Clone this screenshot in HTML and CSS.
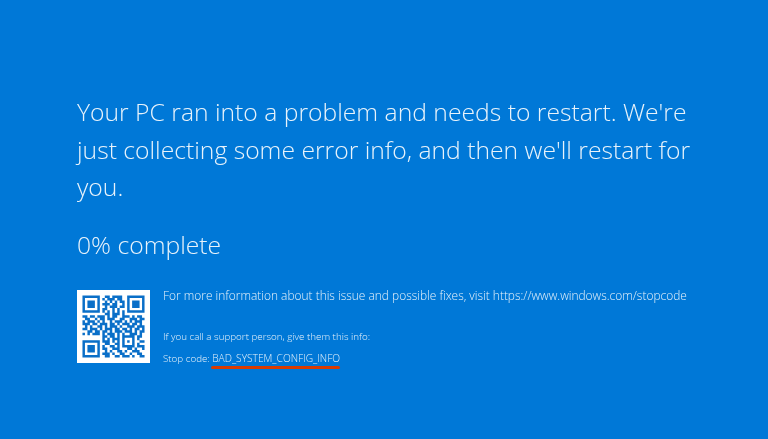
FILE: index.html
```html
<!DOCTYPE html>
<html lang="en">
<head>
<meta charset="utf-8">
<title>Stop code</title>
<link rel="stylesheet" href="styles.css">
</head>
<body>
<main class="screen">
  <h1 class="headline">Your PC ran into a problem and needs to restart. We're<br>just collecting some error info, and then we'll restart for<br>you.</h1>
  <p class="progress">0% complete</p>
  <section class="details">
    <svg class="qr" viewBox="-2.2 -2.2 29.4 29.4" width="73" height="73" role="img" aria-label="QR code">
      <rect class="qr-bg" x="-2.2" y="-2.2" width="29.4" height="29.4"/>
      <path class="qr-mods" d="M0 .5h7M9 .5h2M12 .5h3M15 .5h1M18 .5h7
M0 1.5h1M6 1.5h1M8 1.5h1M10 1.5h3M14 1.5h2M18 1.5h1M24 1.5h1
M0 2.5h1M2 2.5h3M6 2.5h1M9 2.5h1M11 2.5h1M13 2.5h1M15 2.5h2M18 2.5h1M20 2.5h3M24 2.5h1
M0 3.5h1M2 3.5h3M6 3.5h1M8 3.5h3M12 3.5h2M16 3.5h1M18 3.5h1M20 3.5h3M24 3.5h1
M0 4.5h1M2 4.5h3M6 4.5h1M9 4.5h1M11 4.5h3M15 4.5h2M18 4.5h1M20 4.5h3M24 4.5h1
M0 5.5h1M6 5.5h1M8 5.5h2M12 5.5h1M14 5.5h1M18 5.5h1M24 5.5h1
M0 6.5h7M8 6.5h1M10 6.5h1M12 6.5h1M14 6.5h1M16 6.5h1M18 6.5h7
M9 7.5h2M12 7.5h3M16 7.5h1
M0 8.5h2M3 8.5h2M6 8.5h3M10 8.5h1M12 8.5h2M16 8.5h3M20 8.5h1M22 8.5h2
M1 9.5h2M5 9.5h1M7 9.5h2M10 9.5h3M15 9.5h2M19 9.5h3M23 9.5h2
M0 10.5h1M2 10.5h3M6 10.5h1M8 10.5h1M11 10.5h1M13 10.5h3M17 10.5h1M19 10.5h1M21 10.5h3
M0 11.5h3M4 11.5h2M7 11.5h3M11 11.5h2M14 11.5h1M16 11.5h3M20 11.5h2M23 11.5h1
M1 12.5h1M3 12.5h1M6 12.5h2M9 12.5h1M11 12.5h3M15 12.5h1M18 12.5h3M22 12.5h3
M0 13.5h2M3 13.5h3M7 13.5h1M9 13.5h3M13 13.5h2M16 13.5h2M19 13.5h1M21 13.5h2M24 13.5h1
M2 14.5h2M5 14.5h2M8 14.5h2M11 14.5h1M13 14.5h3M17 14.5h3M21 14.5h1M23 14.5h2
M0 15.5h1M2 15.5h1M4 15.5h3M8 15.5h1M10 15.5h3M14 15.5h1M16 15.5h1M19 15.5h3M23 15.5h1
M8 16.5h2M11 16.5h2M14 16.5h1M16 16.5h5M22 16.5h2
M8 17.5h1M10 17.5h1M12 17.5h3M16 17.5h1M20 17.5h1M22 17.5h1
M0 18.5h7M8 18.5h3M12 18.5h1M14 18.5h1M16 18.5h1M18 18.5h1M20 18.5h1M23 18.5h2
M0 19.5h1M6 19.5h1M9 19.5h2M13 19.5h2M16 19.5h1M20 19.5h1M22 19.5h1
M0 20.5h1M2 20.5h3M6 20.5h1M8 20.5h1M11 20.5h2M14 20.5h1M16 20.5h5M22 20.5h3
M0 21.5h1M2 21.5h3M6 21.5h1M8 21.5h2M12 21.5h3M18 21.5h2M21 21.5h1M24 21.5h1
M0 22.5h1M2 22.5h3M6 22.5h1M9 22.5h1M11 22.5h1M14 22.5h2M17 22.5h1M20 22.5h3
M0 23.5h1M6 23.5h1M8 23.5h3M12 23.5h1M15 23.5h2M19 23.5h1M22 23.5h2
M0 24.5h7M9 24.5h2M13 24.5h2M16 24.5h3M20 24.5h1M23 24.5h2"/>
    </svg>
    <div class="info">
      <p class="more">For more information about this issue and possible fixes, visit https://www.windows.com/stopcode</p>
      <p class="small support">If you call a support person, give them this info:</p>
      <p class="small stop">Stop code: <span class="code">BAD_SYSTEM_CONFIG_INFO</span></p>
    </div>
  </section>
</main>
</body>
</html>
```
FILE: styles.css
```css
* { box-sizing: border-box; }
html, body { margin: 0; height: 100%; }
body { background: #0078d7; color: #e8f3fb; font-family: "Open Sans", "Noto Sans", sans-serif; font-weight: 300; overflow: hidden; }
.screen { padding: 93px 0 0 77px; filter: blur(0.35px); }
.headline { margin: 0; font-size: 24.7px; font-weight: 300; line-height: 37.5px; white-space: nowrap; }
.progress { margin: 20px 0 0; font-size: 24.7px; line-height: 37.5px; }
.details { display: flex; gap: 13px; margin-top: 27px; }
.qr { display: block; flex: none; filter: blur(0.3px); }
.qr-bg { fill: #fff; }
.qr-mods { fill: none; stroke: #0a6fc8; stroke-width: 1; }
.info p { margin: 0; }
.info .more { font-size: 11.93px; line-height: 16px; margin-top: -3px; white-space: nowrap; }
.small { font-size: 9.8px; line-height: 14px; }
.info .support { margin-top: 27px; }
.info .stop { margin-top: 7px; }
.code { position: relative; font-size: 10.2px; }
.code::after { content: ""; position: absolute; left: -1px; right: 0; bottom: -4px; height: 3px; border-radius: 2px; background: #d83b01; }
```
